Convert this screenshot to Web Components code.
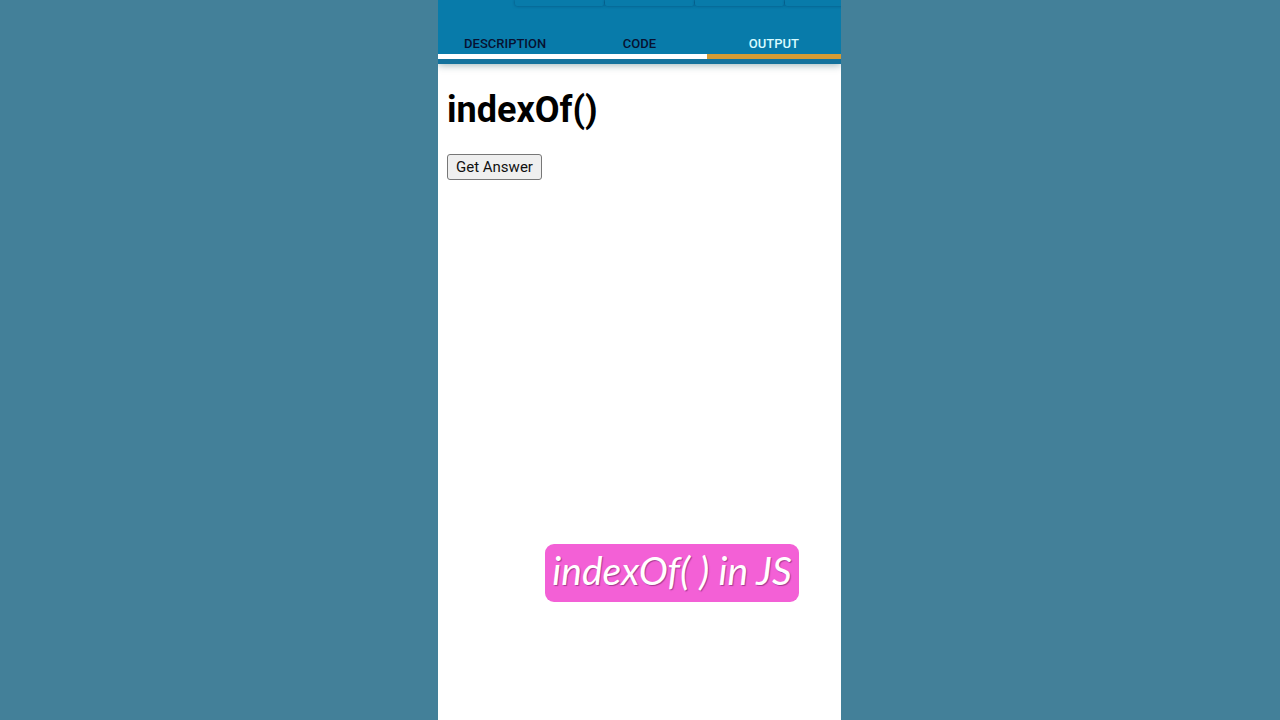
<!DOCTYPE html>
<html lang="en">
<head>
<meta charset="utf-8">
<meta name="viewport" content="width=device-width, initial-scale=1">
<title>indexOf()</title>
<style>
  body { margin: 0; background: #438099; font-family: Roboto, "Liberation Sans", sans-serif; }
</style>
</head>
<body>
<app-stage>
  <app-header slot="header">
    <tab-item>Description</tab-item>
    <tab-item>Code</tab-item>
    <tab-item active>Output</tab-item>
  </app-header>
  <output-panel heading="indexOf()"><answer-button>Get Answer</answer-button></output-panel>
  <video-caption slot="overlay">indexOf( ) in JS</video-caption>
</app-stage>
<script>
function define(name, html, setup) {
  const template = document.createElement('template');
  template.innerHTML = html;
  customElements.define(name, class extends HTMLElement {
    constructor() {
      super();
      this.attachShadow({ mode: 'open' }).append(template.content.cloneNode(true));
    }
    connectedCallback() { if (setup) setup(this); }
  });
}

define('app-stage', `
  <style>
    :host { display: grid; grid-template-columns: 438fr 403fr 439fr; min-height: 100vh; }
    main { grid-column: 2; position: relative; background: #fff; min-width: 0; overflow: hidden; }
    ::slotted([slot=overlay]) { position: absolute; right: 42px; bottom: 118px; }
  </style>
  <main><slot name="header"></slot><slot></slot><slot name="overlay"></slot></main>`);

define('app-header', `
  <style>
    :host { display: block; background: #087baa; border-bottom: 5px solid #13729d;
            box-shadow: 0 1px 8px rgba(0, 60, 70, .4); position: relative; }
    .tiles { display: grid; grid-template-columns: 89px 89px 89px 89px; gap: 1px;
             padding-left: 77px; height: 6px; width: 0; }
    .tiles i { border-radius: 0 0 2px 2px; background: #087baa; box-shadow: 0 0 3px rgba(0, 40, 80, .5); }
    .clip { overflow: hidden; height: 10px; }
    nav { display: grid; grid-template-columns: repeat(3, 1fr); padding-top: 24px; }
  </style>
  <div class="clip" aria-hidden="true"><div class="tiles"><i></i><i></i><i></i><i></i></div></div>
  <nav><slot></slot></nav>`);

define('tab-item', `
  <style>
    :host { display: block; }
    a { display: block; height: 20px; line-height: 20px; text-align: center; text-decoration: none;
        text-transform: uppercase; font-size: 13px; font-weight: 500; color: #071231;
        border-bottom: 5px solid #fff; }
    :host([active]) a { color: #d8fbff; border-color: #d59c35; }
  </style>
  <a href="#"><slot></slot></a>`);

define('output-panel', `
  <style>
    :host { display: block; padding: 24px 9px; }
    h1 { margin: 0 0 22px; font-size: 36px; line-height: 44px; font-weight: 700; color: #000; }
  </style>
  <h1></h1><slot></slot>`,
  el => { el.shadowRoot.querySelector('h1').textContent = el.getAttribute('heading'); });

define('answer-button', `
  <style>
    :host { display: block; }
    button { display: block; box-sizing: border-box; height: 26px; padding: 0 8px; font: 15px/20px Roboto, sans-serif;
             color: #111; background: #efefef; border: 1px solid #777; border-radius: 3px; }
  </style>
  <button type="button"><slot></slot></button>`);

define('video-caption', `
  <style>
    :host { display: block; box-sizing: border-box; width: 254px; height: 58px; line-height: 52px;
            border-radius: 9px; background: #f360d6; color: #fff; text-align: center; white-space: nowrap;
            font-family: Lato, sans-serif; font-style: italic; font-size: 39px;
            text-shadow: 1px 1px 1px rgba(90, 20, 80, .5); }
  </style>
  <slot></slot>`);
</script>
</body>
</html>
